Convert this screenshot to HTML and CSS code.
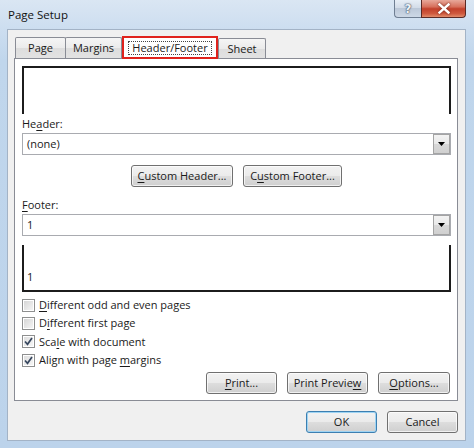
FILE: index.html
```html
<!DOCTYPE html>
<html>
<head>
<meta charset="utf-8">
<title>Page Setup</title>
<link rel="stylesheet" href="styles.css">
</head>
<body>
<div class="window">
  <div class="titlebar">
    <span class="title">Page Setup</span>
    <div class="caption">
      <div class="cap-help"><span>?</span></div>
      <div class="cap-close">
        <svg width="14" height="11" viewBox="0 0 14 11"><path d="M2.5 1.5 L11.5 9.5 M11.5 1.5 L2.5 9.5" stroke="#fff" stroke-width="2.4" stroke-linecap="square" fill="none"/></svg>
      </div>
    </div>
  </div>
  <div class="client">
    <div class="tabs">
      <div class="tab t-page">Page</div>
      <div class="tab t-margins">Margins</div>
      <div class="tab tab-sel"><span class="focus">Header/Footer</span></div>
      <div class="tab t-sheet">Sheet</div>
    </div>
    <div class="panel">
      <div class="preview preview-header"></div>
      <div class="lbl lbl-header">He<u>a</u>der:</div>
      <div class="select">
        <span class="sel-text">(none)</span>
        <span class="drop"><svg width="7" height="4" viewBox="0 0 7 4"><path d="M0 0 H7 L3.5 4 Z" fill="#000"/></svg></span>
      </div>
      <div class="custom-row">
        <div class="btn btn-ch"><u>C</u>ustom Header...</div>
        <div class="btn btn-cf">C<u>u</u>stom Footer...</div>
      </div>
      <div class="lbl lbl-footer"><u>F</u>ooter:</div>
      <div class="select">
        <span class="sel-text">1</span>
        <span class="drop"><svg width="7" height="4" viewBox="0 0 7 4"><path d="M0 0 H7 L3.5 4 Z" fill="#000"/></svg></span>
      </div>
      <div class="preview preview-footer"><span class="pv-text">1</span></div>
      <div class="checks">
        <div class="chk-row"><span class="box"></span><span><u>D</u>ifferent odd and even pages</span></div>
        <div class="chk-row"><span class="box"></span><span>D<u>i</u>fferent first page</span></div>
        <div class="chk-row"><span class="box checked"><svg width="11" height="11" viewBox="0 0 11 11"><path d="M2 5.5 L4.5 8.3 L9 2" stroke="#37475f" stroke-width="1.7" fill="none"/></svg></span><span>Sca<u>l</u>e with document</span></div>
        <div class="chk-row"><span class="box checked"><svg width="11" height="11" viewBox="0 0 11 11"><path d="M2 5.5 L4.5 8.3 L9 2" stroke="#37475f" stroke-width="1.7" fill="none"/></svg></span><span>Align with page <u>m</u>argins</span></div>
      </div>
      <div class="btn-row">
        <div class="btn btn-print"><u>P</u>rint...</div>
        <div class="btn btn-preview">Print Previe<u>w</u></div>
        <div class="btn btn-options"><u>O</u>ptions...</div>
      </div>
    </div>
    <div class="dlg-row">
      <div class="btn btn-ok">OK</div>
      <div class="btn btn-cancel">Cancel</div>
    </div>
  </div>
</div>
</body>
</html>
```

FILE: styles.css
```css
* { box-sizing: border-box; }
html, body { margin: 0; padding: 0; }
body {
  width: 474px;
  height: 448px;
  overflow: hidden;
  font-family: "Open Sans", "Noto Sans", "DejaVu Sans", sans-serif;
  font-size: 11px;
  color: #1a1a1a;
}
u { text-decoration-thickness: 1px; text-underline-offset: 2px; }

.window {
  width: 474px;
  height: 448px;
  background: linear-gradient(180deg, #dae6f3 0px, #cddef0 28px, #c0d6ec 60px, #bcd3eb 100%);
  display: flex;
  flex-direction: column;
}

.titlebar {
  height: 29px;
  display: flex;
  align-items: flex-start;
  justify-content: space-between;
  flex: none;
}
.title {
  margin: 7px 0 0 8px;
  line-height: 16px;
  font-size: 11.5px;
  color: #111;
}
.caption {
  display: flex;
  margin-right: 8px;
}
.cap-help {
  width: 27px;
  height: 18px;
  border: 1px solid #6f7e92;
  border-top: none;
  border-right: none;
  border-radius: 0 0 0 4px;
  background: linear-gradient(180deg, #e7eef6 0%, #d3dce8 45%, #bcc8d8 50%, #cdd8e6 100%);
  display: flex;
  align-items: center;
  justify-content: center;
}
.cap-help span {
  font-family: "DejaVu Sans", sans-serif;
  font-weight: bold;
  font-size: 12px;
  color: #eef2f7;
  text-shadow: 0 0 1px #4b5a70, 0 0 1px #4b5a70, 0 0 2px #4b5a70;
  line-height: 12px;
}
.cap-close {
  width: 45px;
  height: 18px;
  border: 1px solid #5b2a25;
  border-top: none;
  border-radius: 0 0 4px 0;
  background: linear-gradient(180deg, #e8a89a 0%, #d7705c 40%, #c2402b 52%, #cf5a3f 80%, #e28c6b 100%);
  display: flex;
  align-items: center;
  justify-content: center;
}
.cap-close svg { filter: drop-shadow(0 0 1px #6b1d12); }

.client {
  margin: 0 8px 7px 7px;
  height: 412px;
  background: #f0f0f0;
  border: 1px solid #a3b3c6;
  display: flex;
  flex-direction: column;
  padding: 0 7px 0 6px;
}

.tabs {
  height: 28px;
  display: flex;
  align-items: flex-end;
  padding-left: 1px;
  flex: none;
}
.tab {
  border: 1px solid #898c95;
  border-bottom: none;
  border-radius: 2px 2px 0 0;
  background: linear-gradient(180deg, #f5f5f5 0%, #ebebeb 50%, #dddddd 51%, #e2e2e2 100%);
  display: flex;
  align-items: center;
  justify-content: center;
  line-height: 14px;
}
.t-page { width: 51px; height: 21px; }
.t-margins { width: 57px; height: 21px; margin-left: -1px; }
.t-sheet { width: 48px; height: 20px; margin-left: 0; }
.tab-sel {
  width: 96px;
  height: 23px;
  margin-bottom: -1px;
  border: 2px solid #e0221c;
  border-radius: 0;
  background: #ffffff;
  position: relative;
  z-index: 1;
}
.focus {
  display: block;
  border: 1px dotted #444;
  padding: 0 3px;
  line-height: 12px;
  width: 84px;
  text-align: center;
}

.panel {
  width: 444px;
  height: 343px;
  background: #ffffff;
  border: 1px solid #898c95;
  padding: 7px 6px 0 7px;
  flex: none;
  display: flex;
  flex-direction: column;
}

.preview {
  height: 48px;
  background: #fff;
  border-left: 2px solid #1c1c1c;
  border-right: 2px solid #1c1c1c;
  flex: none;
}
.preview-header { border-top: 2px solid #1c1c1c; }
.preview-footer {
  height: 47px;
  margin-top: 9px;
  border-bottom: 2px solid #1c1c1c;
  display: flex;
  align-items: flex-end;
  padding: 0 0 5px 3px;
}
.pv-text { line-height: 16px; }

.lbl { line-height: 16px; height: 16px; }
.lbl-header { margin-top: 2px; }
.lbl-footer { margin-top: 10px; }

.select {
  margin-top: 1px;
  height: 22px;
  border: 1px solid #a9abb0;
  background: #fff;
  display: flex;
  align-items: center;
  justify-content: space-between;
  flex: none;
}
.sel-text { padding-left: 4px; line-height: 16px; }
.drop {
  width: 17px;
  height: 20px;
  border: 1px solid #a4a4a4;
  background: linear-gradient(180deg, #f3f3f3 0%, #e8e8e8 50%, #d8d8d8 51%, #d0d0d0 100%);
  display: flex;
  align-items: center;
  justify-content: center;
}

.btn {
  height: 22px;
  border: 1px solid #707070;
  border-radius: 3px;
  background: linear-gradient(180deg, #f2f2f2 0%, #ebebeb 48%, #dddddd 52%, #cfcfcf 100%);
  box-shadow: inset 0 0 0 1px rgba(255,255,255,0.7);
  display: flex;
  align-items: center;
  justify-content: center;
  line-height: 14px;
  flex: none;
}

.custom-row {
  margin-top: 10px;
  display: flex;
  justify-content: center;
  gap: 10px;
  padding-left: 0;
}
.btn-ch { width: 102px; }
.btn-cf { width: 99px; }

.checks {
  margin-top: 4px;
  display: flex;
  flex-direction: column;
}
.chk-row {
  height: 18px;
  display: flex;
  align-items: center;
  gap: 4px;
  line-height: 16px;
}
.chk-row:nth-child(3) { height: 19px; }
.box {
  width: 13px;
  height: 13px;
  border: 1px solid #8e8f8f;
  background:
    linear-gradient(135deg, #d6d6d6 0%, #f4f4f4 100%) content-box,
    #ffffff;
  padding: 1px;
  display: flex;
  align-items: center;
  justify-content: center;
  flex: none;
  position: relative;
}
.box.checked { padding: 0; background: linear-gradient(135deg, #dcdcdc 0%, #f8f8f8 100%); box-shadow: inset 0 0 0 1px #fff; }

.btn-row {
  margin-top: 3px;
  display: flex;
  justify-content: flex-end;
  gap: 10px;
  padding-right: 1px;
}
.btn-print { width: 71px; }
.btn-preview { width: 81px; }
.btn-options { width: 72px; }

.dlg-row {
  margin-top: 10px;
  display: flex;
  justify-content: flex-end;
  gap: 10px;
}
.btn-ok {
  width: 71px;
  border-color: #3c7fb1;
  box-shadow: inset 0 0 0 1px #9fd4f3;
}
.btn-cancel { width: 71px; }
```
